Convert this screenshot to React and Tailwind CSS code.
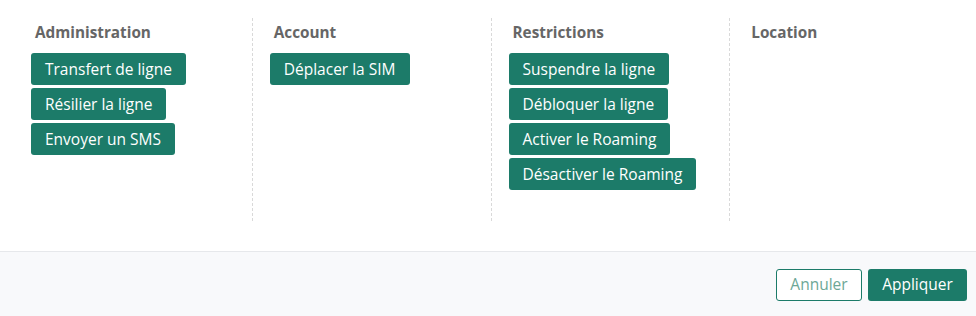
import React from "react";

const columns = [
  { title: "Administration", items: ["Transfert de ligne", "Résilier la ligne", "Envoyer un SMS"] },
  { title: "Account", items: ["Déplacer la SIM"] },
  { title: "Restrictions", items: ["Suspendre la ligne", "Débloquer la ligne", "Activer le Roaming", "Désactiver le Roaming"] },
  { title: "Location", items: [] },
];

export default function App() {
  return (
    <div className="w-[976px] h-[316px] bg-white flex flex-col" style={{ fontFamily: '"Open Sans", "Noto Sans", sans-serif' }}>
      <div className="flex pl-[13px] pr-[8px] pt-[18px] pb-[30px] h-[251px]">
        {columns.map((col, i) => (
          <div
            key={col.title}
            className={`flex-1 pl-[17px] pt-[4px] border-l border-dashed ${i === 0 ? "border-transparent" : "border-[#d9d9d9]"}`}
          >
            <div className="text-[15.3px] font-bold text-[#666666] leading-[20px] pl-[4px] mb-[11px]">{col.title}</div>
            <div className="flex flex-col items-start gap-[3px]">
              {col.items.map((it) => (
                <button
                  key={it}
                  className="h-[32px] px-[14px] rounded-[3px] bg-[#1c7b69] text-white text-[15.5px] leading-[20px]"
                >
                  {it}
                </button>
              ))}
            </div>
          </div>
        ))}
      </div>
      <div className="flex-1 border-t border-[#e6e8eb] bg-[#f8f9fb] flex justify-end items-start pt-[17px] pr-[9px] gap-[6px]">
        <button className="h-[32px] w-[86px] rounded-[3px] border border-[#1c7b69] bg-white text-[#6da796] text-[15.5px]">
          Annuler
        </button>
        <button className="h-[32px] w-[99px] rounded-[3px] bg-[#1c7b69] text-white text-[15.5px]">
          Appliquer
        </button>
      </div>
    </div>
  );
}
